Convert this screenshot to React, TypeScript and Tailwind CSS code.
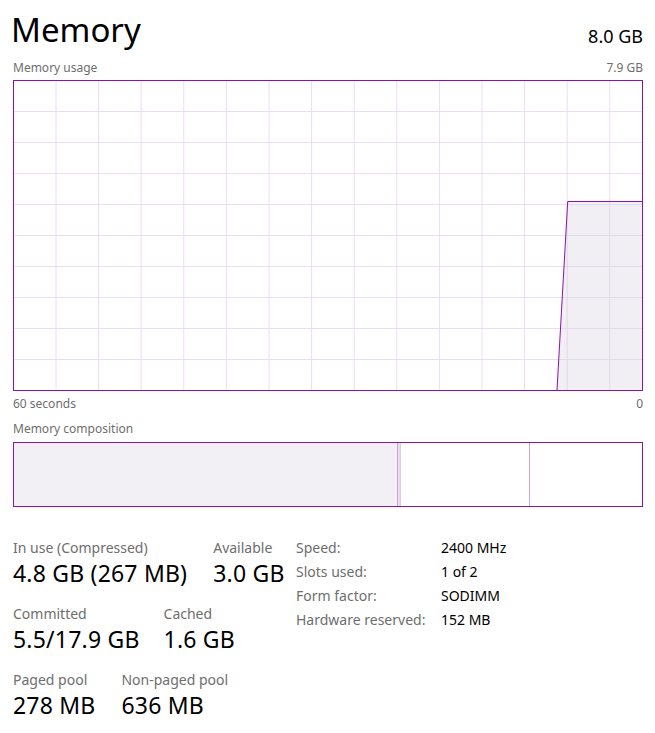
import React from "react";

const FONT = { fontFamily: '"Noto Sans", "Open Sans", Arial, sans-serif' };

const W = 630;
const H = 311;
const vLines = Array.from({ length: 14 }, (_, k) => 43 + k * 42.6);
const hLines = Array.from({ length: 9 }, (_, k) => 31 * (k + 1));

function UsageChart() {
  return (
    <svg width={W} height={H} viewBox={`0 0 ${W} ${H}`} className="block">
      <rect x={0} y={0} width={W} height={H} fill="#ffffff" />
      {vLines.map((x) => (
        <line key={`v${x}`} x1={x} y1={0} x2={x} y2={H} stroke="#ecdcf1" strokeWidth={1} />
      ))}
      {hLines.map((y) => (
        <line key={`h${y}`} x1={0} y1={y + 0.5} x2={W} y2={y + 0.5} stroke="#ecdcf1" strokeWidth={1} />
      ))}
      <polygon points="544,310 554.7,121.5 629,121.5 629,310" fill="#d6d0dc" fillOpacity={0.35} />
      <polyline points="544,310 554.7,121.5 629,121.5" fill="none" stroke="#8b12ae" strokeWidth={1} />
      <rect x={0.5} y={0.5} width={W - 1} height={H - 1} fill="none" stroke="#8b12ae" strokeWidth={1} />
    </svg>
  );
}

function Stat({ label, value }: { label: string; value: string }) {
  return (
    <div className="flex flex-col">
      <span className="text-[14px] leading-[18px] text-[#6e6e6e]">{label}</span>
      <span className="text-[23px] leading-[33px] text-black tracking-[0.2px]">{value}</span>
    </div>
  );
}

const details = [
  ["Speed:", "2400 MHz"],
  ["Slots used:", "1 of 2"],
  ["Form factor:", "SODIMM"],
  ["Hardware reserved:", "152 MB"],
];

export default function App() {
  return (
    <div className="w-[655px] h-[733px] bg-white pl-[13px] pr-[12px] overflow-hidden" style={FONT}>
      <div className="flex items-end justify-between pt-[8px]">
        <span className="text-[33px] leading-[44px] text-black -ml-[2px]">Memory</span>
        <span className="text-[18px] leading-[24px] text-black mb-[4px]">8.0 GB</span>
      </div>
      <div className="flex justify-between text-[12px] leading-[16px] text-[#6e6e6e] mt-[8px]">
        <span>Memory usage</span>
        <span>7.9 GB</span>
      </div>
      <div className="mt-[4px]">
        <UsageChart />
      </div>
      <div className="flex justify-between text-[12px] leading-[16px] text-[#6e6e6e] mt-[5px]">
        <span>60 seconds</span>
        <span>0</span>
      </div>
      <div className="text-[12px] leading-[16px] text-[#6e6e6e] mt-[9px]">Memory composition</div>
      <div className="mt-[5px] h-[65px] flex border border-[#8b12ae]">
        <div className="w-[384px] bg-[#f2f0f4] border-r border-[#c9a9d3]" />
        <div className="w-[3px] bg-[#eadbee] border-r border-[#e2c9ea]" />
        <div className="w-[129px] bg-white border-r border-[#c9a5d6]" />
        <div className="flex-1 bg-white" />
      </div>
      <div className="flex mt-[32px]">
        <div className="w-[283px] flex flex-col gap-[15px]">
          <div className="flex gap-[26px]">
            <Stat label="In use (Compressed)" value="4.8 GB (267 MB)" />
            <Stat label="Available" value="3.0 GB" />
          </div>
          <div className="flex gap-[24px]">
            <Stat label="Committed" value="5.5/17.9 GB" />
            <Stat label="Cached" value="1.6 GB" />
          </div>
          <div className="flex gap-[26px]">
            <Stat label="Paged pool" value="278 MB" />
            <Stat label="Non-paged pool" value="636 MB" />
          </div>
        </div>
        <div className="flex flex-col">
          {details.map(([k, v]) => (
            <div key={k} className="flex text-[14px] leading-[24px] -mt-[3px] mb-[3px]">
              <span className="w-[145px] text-[#6e6e6e]">{k}</span>
              <span className="text-black">{v}</span>
            </div>
          ))}
        </div>
      </div>
    </div>
  );
}
